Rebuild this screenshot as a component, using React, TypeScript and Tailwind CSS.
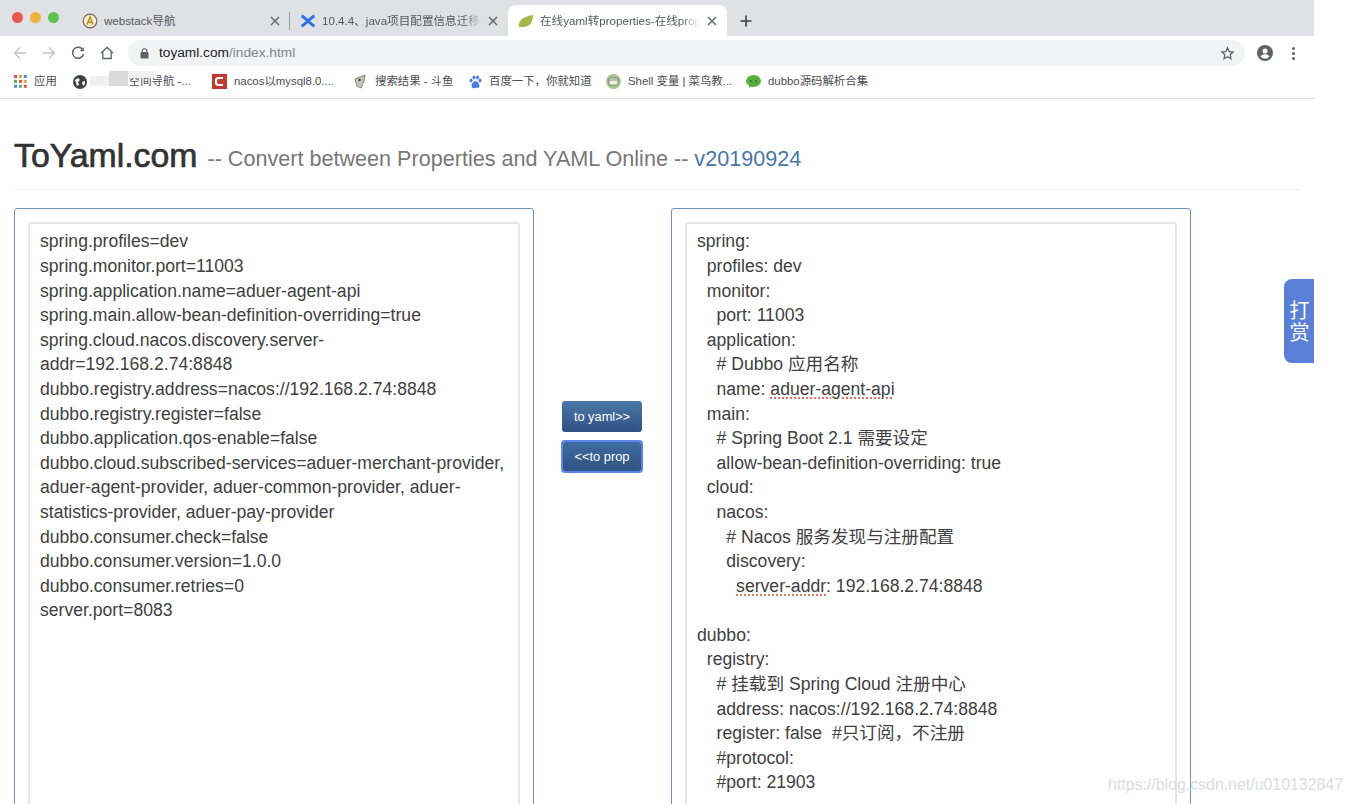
import React from "react";

const SANS = "font-['Liberation_Sans','Noto_Sans_CJK_SC',sans-serif]";

const left = [
  "spring.profiles=dev",
  "spring.monitor.port=11003",
  "spring.application.name=aduer-agent-api",
  "spring.main.allow-bean-definition-overriding=true",
  "spring.cloud.nacos.discovery.server-",
  "addr=192.168.2.74:8848",
  "dubbo.registry.address=nacos://192.168.2.74:8848",
  "dubbo.registry.register=false",
  "dubbo.application.qos-enable=false",
  "dubbo.cloud.subscribed-services=aduer-merchant-provider,",
  "aduer-agent-provider, aduer-common-provider, aduer-",
  "statistics-provider, aduer-pay-provider",
  "dubbo.consumer.check=false",
  "dubbo.consumer.version=1.0.0",
  "dubbo.consumer.retries=0",
  "server.port=8083",
];

const Squiggle = ({ children }: { children: React.ReactNode }) => (
  <span className="underline decoration-dotted decoration-[#e0736a] decoration-2 underline-offset-[3px]">{children}</span>
);

const right: React.ReactNode[] = [
  "spring:",
  "  profiles: dev",
  "  monitor:",
  "    port: 11003",
  "  application:",
  "    # Dubbo 应用名称",
  <>{"    name: "}<Squiggle>aduer-agent-api</Squiggle></>,
  "  main:",
  "    # Spring Boot 2.1 需要设定",
  "    allow-bean-definition-overriding: true",
  "  cloud:",
  "    nacos:",
  "      # Nacos 服务发现与注册配置",
  "      discovery:",
  <>{"        "}<Squiggle>server-addr</Squiggle>{": 192.168.2.74:8848"}</>,
  " ",
  "dubbo:",
  "  registry:",
  "    # 挂载到 Spring Cloud 注册中心",
  "    address: nacos://192.168.2.74:8848",
  "    register: false  #只订阅，不注册",
  "    #protocol:",
  "    #port: 21903",
];

const CodePanel = ({ lines }: { lines: React.ReactNode[] }) => (
  <div className="w-[520px] h-[640px] shrink-0 border border-[#6f93c4] rounded-t-[3px] px-[13px] pt-[13px]">
    <div className="h-[620px] border-2 border-b-0 border-[#e6e6e6] rounded-t-[3px] pl-[10px] pt-[5.4px] text-[17.6px] leading-[24.6px] text-[#404040] whitespace-pre">
      {lines.map((l, i) => (
        <div key={i} className="h-[24.6px]">{l}</div>
      ))}
    </div>
  </div>
);

const TabClose = () => (
  <svg width="10" height="10" viewBox="0 0 10 10" className="shrink-0" stroke="#5f6368" strokeWidth="1.4">
    <path d="M1 1l8 8M9 1l-8 8" />
  </svg>
);

const Bookmark = ({ icon, label, className }: { icon: React.ReactNode; label: string; className: string }) => (
  <div className={`flex items-center gap-[7px] shrink-0 ${className}`}>
    {icon}
    <span className="text-[11.4px] text-[#4a4d52] whitespace-pre">{label}</span>
  </div>
);

export default function App() {
  return (
    <div className={`w-[1352px] h-[804px] overflow-hidden bg-white relative ${SANS}`}>
      <div className="w-[1314px]">
        {/* tab strip */}
        <div className="h-9 bg-[#dfe1e5] flex items-end relative">
          <div className="flex gap-[7px] pl-3 self-start pt-[12px] w-[71px] shrink-0">
            <span className="w-[11px] h-[11px] rounded-full bg-[#e8584f]" />
            <span className="w-[11px] h-[11px] rounded-full bg-[#eeb23f]" />
            <span className="w-[11px] h-[11px] rounded-full bg-[#5fc152]" />
          </div>
          <div className="w-[218px] h-[31px] flex items-center pl-[11px] pr-[9px] shrink-0">
            <svg width="16" height="16" viewBox="0 0 16 16" className="shrink-0">
              <circle cx="8" cy="8" r="6.8" fill="#f6eecd" stroke="#77695a" strokeWidth="1.2" />
              <path d="M5 11.5L8 4l3 7.5M6 9.2h4" fill="none" stroke="#b98a17" strokeWidth="1.4" />
            </svg>
            <span className="ml-[6px] text-[11.6px] text-[#55585c] flex-1">webstack导航</span>
            <TabClose />
          </div>
          <div className="w-px h-[18px] bg-[#9b9da1] mb-[6px] shrink-0" />
          <div className="w-[218px] h-[31px] flex items-center pl-[10px] pr-[10px] shrink-0">
            <svg width="16" height="14" viewBox="0 0 16 14" fill="none" stroke="#2b6fe0" strokeWidth="3" className="shrink-0">
              <path d="M1.500 2C5 3 11 11 14.500 12" />
              <path d="M14.500 2C11 3 5 11 1.500 12" />
            </svg>
            <span className="ml-[6px] text-[11.6px] text-[#55585c] w-[160px] overflow-hidden whitespace-nowrap [mask-image:linear-gradient(90deg,#000_88%,transparent)]">10.4.4、java项目配置信息迁移至</span>
            <span className="ml-auto"><TabClose /></span>
          </div>
          <div className="w-[219px] h-[31px] bg-white rounded-t-[8px] flex items-center pl-[10px] pr-[10px] shrink-0">
            <svg width="16" height="14" viewBox="0 0 16 14" className="shrink-0">
              <path d="M1 13C0 7 4 3 15 1c0 7-3 12-10 12-1.500 0-3 0-4 0z" fill="#a3b84a" />
            </svg>
            <span className="ml-[6px] text-[11.6px] text-[#55585c] w-[160px] overflow-hidden whitespace-nowrap [mask-image:linear-gradient(90deg,#000_88%,transparent)]">在线yaml转properties-在线prop</span>
            <span className="ml-auto"><TabClose /></span>
          </div>
          <svg width="12" height="12" viewBox="0 0 12 12" className="ml-[13px] mb-[9px]" stroke="#3c4043" strokeWidth="1.6">
            <path d="M6 .5v11M.5 6h11" />
          </svg>
        </div>

        {/* toolbar */}
        <div className="h-[33px] flex items-start pt-[4px] pl-[13px] pr-[19px] bg-white">
          <div className="h-[26px] flex items-center shrink-0">
            <svg width="14" height="14" viewBox="0 0 14 14" fill="none" stroke="#c2c4c7" strokeWidth="1.3" className="shrink-0">
              <path d="M13 7H1.500M7 1.500L1.500 7 7 12.500" />
            </svg>
            <svg width="14" height="14" viewBox="0 0 14 14" fill="none" stroke="#c2c4c7" strokeWidth="1.3" className="ml-[15px] shrink-0">
              <path d="M1 7h11.500M7 1.500L12.500 7 7 12.500" />
            </svg>
            <svg width="14" height="14" viewBox="0 0 14 14" fill="none" stroke="#5f6368" strokeWidth="1.5" className="ml-[15px] shrink-0">
              <path d="M12 4.200A5.500 5.500 0 1 0 12.500 8" />
              <path d="M12.800 1v4.200H8.600z" fill="#5f6368" stroke="none" />
            </svg>
            <svg width="14" height="14" viewBox="0 0 14 14" fill="none" stroke="#5f6368" strokeWidth="1.3" className="ml-[15px] shrink-0">
              <path d="M1 7l6-5.500L13 7M2.800 6v6.500h8.400V6" />
            </svg>
          </div>
          <div className="ml-[14px] flex-1 h-[26px] rounded-full bg-[#f1f3f4] flex items-center pl-[12px] pr-[10px]">
            <svg width="9" height="11" viewBox="0 0 9 11" className="shrink-0">
              <rect x=".5" y="4" width="8" height="6.500" rx="1" fill="#5f6368" />
              <path d="M2.200 4.500V3a2.300 2.300 0 0 1 4.600 0v1.500" fill="none" stroke="#5f6368" strokeWidth="1.1" />
            </svg>
            <span className="ml-[10px] text-[13.7px] text-[#202124]">toyaml.com<span className="text-[#80868b]">/index.html</span></span>
            <svg width="15" height="15" viewBox="0 0 24 24" fill="none" stroke="#5f6368" strokeWidth="2" className="ml-auto">
              <path d="M12 3l2.700 6 6.300.7-4.700 4.300 1.300 6.500L12 17.200 6.400 20.500l1.300-6.500L3 9.700 9.300 9z" />
            </svg>
          </div>
          <div className="h-[26px] flex items-center shrink-0">
            <svg width="16" height="16" viewBox="0 0 16 16" className="ml-[12px] shrink-0">
              <circle cx="8" cy="8" r="8" fill="#5f6368" />
              <circle cx="8" cy="6" r="2.500" fill="#fff" />
              <path d="M3.500 11.500c1-1.700 2.800-2.300 4.500-2.300s3.500.6 4.500 2.300c-1 1.300-2.700 2.100-4.500 2.100s-3.500-.8-4.500-2.100z" fill="#fff" />
            </svg>
            <div className="ml-[19px] flex flex-col gap-[2px] shrink-0">
              <span className="w-[3px] h-[3px] rounded-full bg-[#5f6368]" />
              <span className="w-[3px] h-[3px] rounded-full bg-[#5f6368]" />
              <span className="w-[3px] h-[3px] rounded-full bg-[#5f6368]" />
            </div>
          </div>
        </div>

        {/* bookmarks */}
        <div className="h-[30px] border-b border-[#dedfe1] flex items-center pl-[14px] pb-[3px] relative">
          <Bookmark
            className="w-[59px]"
            label="应用"
            icon={
              <svg width="13" height="13" viewBox="0 0 12 12" className="shrink-0">
                {[0, 4.500, 9].map((y, r) =>
                  [0, 4.500, 9].map((x, c) => (
                    <rect key={`${r}${c}`} x={x} y={y} width="2.800" height="2.800" fill={["#d9534f", "#e9a23b", "#4a8fe0", "#5fae5f", "#d9534f", "#e9a23b", "#4a8fe0", "#5fae5f", "#d9534f"][r * 3 + c]} />
                  ))
                )}
              </svg>
            }
          />
          <Bookmark
            className="w-[139px]"
            label="           空间导航 -..."
            icon={
              <svg width="14" height="14" viewBox="0 0 14 14" className="shrink-0">
                <circle cx="7" cy="7" r="7" fill="#3c4043" />
                <path d="M2 5l3-2 2 2-2 2 1 3-2 1zM9 7l3-1 0 3-2 2z" fill="#fff" />
              </svg>
            }
          />
          <Bookmark
            className="w-[141px]"
            label="nacos以mysql8.0...."
            icon={
              <svg width="15" height="15" viewBox="0 0 15 15" className="shrink-0">
                <rect width="15" height="15" fill="#bd3a2c" />
                <path d="M11 4H6.500A2.500 2.500 0 0 0 4 6.500v2A2.500 2.500 0 0 0 6.500 11H11" fill="none" stroke="#fff" strokeWidth="2.200" />
              </svg>
            }
          />
          <Bookmark
            className="w-[116px]"
            label="搜索结果 - 斗鱼"
            icon={
              <svg width="15" height="15" viewBox="0 0 15 15" className="shrink-0">
                <path d="M2 5l10-4-1 6-3 7-4-2z" fill="#c9c6bb" stroke="#6b6a60" strokeWidth=".8" />
                <circle cx="6.500" cy="6" r="1.300" fill="#4a4a42" />
              </svg>
            }
          />
          <Bookmark
            className="w-[137px]"
            label="百度一下，你就知道"
            icon={
              <svg width="13" height="14" viewBox="0 0 13 14" fill="#4a7fe0" className="shrink-0">
                <ellipse cx="2" cy="5.500" rx="1.500" ry="2" />
                <ellipse cx="5" cy="2.500" rx="1.500" ry="2" />
                <ellipse cx="8.500" cy="2.500" rx="1.500" ry="2" />
                <ellipse cx="11" cy="5.500" rx="1.500" ry="2" />
                <path d="M6.500 6c-2 0-4 3-4 5 0 2 2 2.500 4 2s4 .5 4-2c0-2-2-5-4-5z" />
              </svg>
            }
          />
          <Bookmark
            className="w-[140px]"
            label="Shell 变量 | 菜鸟教..."
            icon={
              <svg width="15" height="15" viewBox="0 0 15 15" className="shrink-0">
                <circle cx="7.500" cy="7.500" r="7.500" fill="#a9c58f" />
                <rect x="3" y="4" width="9" height="7" rx="1" fill="#eef1e6" stroke="#5c6b55" strokeWidth=".7" />
                <path d="M3 6h9" stroke="#5c6b55" strokeWidth=".7" />
              </svg>
            }
          />
          <Bookmark
            className="w-[130px]"
            label="dubbo源码解析合集"
            icon={
              <svg width="15" height="13" viewBox="0 0 15 13" className="shrink-0">
                <ellipse cx="7.500" cy="6" rx="7.500" ry="6" fill="#55b03c" />
                <path d="M3.500 10l-.5 3 3-2z" fill="#55b03c" />
                <circle cx="5" cy="6" r="1" fill="#2f7a22" />
                <circle cx="10" cy="6" r="1" fill="#2f7a22" />
              </svg>
            }
          />
          {/* blurred-out patches over the second bookmark */}
          <div className="absolute left-[128px] top-[2px] w-[29px] h-[7px] bg-[#f0f0f0]" />
          <div className="absolute left-[90px] top-[7px] w-[20px] h-[10px] bg-[#f0f0f0]" />
          <div className="absolute left-[109px] top-[2px] w-[19px] h-[15px] bg-[#d9d9d9]" />
        </div>

        {/* page */}
        <div className="px-[14px]">
          <div className="h-[91px] border-b border-[#eeeeee] flex items-end pb-[12px] w-[1286px]">
            <h1 className="text-[33.8px] leading-[44px] text-[#333333] font-normal [-webkit-text-stroke:0.7px_#333333] whitespace-nowrap">ToYaml.com</h1>
            <span className="ml-[10px] mb-[3px] text-[21.6px] leading-[30px] text-[#777777] whitespace-nowrap">
              -- Convert between Properties and YAML Online -- <span className="text-[#4a76a8]">v20190924</span>
            </span>
          </div>
          <div className="flex pt-[18px]">
            <CodePanel lines={left} />
            <div className="w-[137px] shrink-0 flex flex-col items-center pt-[193px] gap-[10px]">
              <button className="w-[80px] h-[31px] pt-[1px] rounded-[3px] bg-gradient-to-b from-[#4a78a8] to-[#2f5283] text-white text-[12.8px] ml-[-1px]">to yaml&gt;&gt;</button>
              <button className="w-[78px] h-[29px] pt-[1px] rounded-[2px] bg-gradient-to-b from-[#3f6ca0] to-[#2f5283] text-white text-[12.8px] ml-[-1px] ring-2 ring-[#5b86e8]">&lt;&lt;to prop</button>
            </div>
            <CodePanel lines={right} />
          </div>
        </div>
      </div>

      {/* floating tip button */}
      <div className="absolute left-[1284px] top-[279px] w-[30px] h-[84px] bg-[#5a7fd6] rounded-l-[8px] flex items-center justify-center text-white text-[20px] leading-[22px] text-center pl-[1px] pt-[1px]">
        打<br />赏
      </div>

      {/* watermark */}
      <div className="absolute left-[1108px] top-[774px] text-[15.9px] leading-[22px] text-[#dddddd] whitespace-nowrap">https://blog.csdn.net/u010132847</div>
    </div>
  );
}
